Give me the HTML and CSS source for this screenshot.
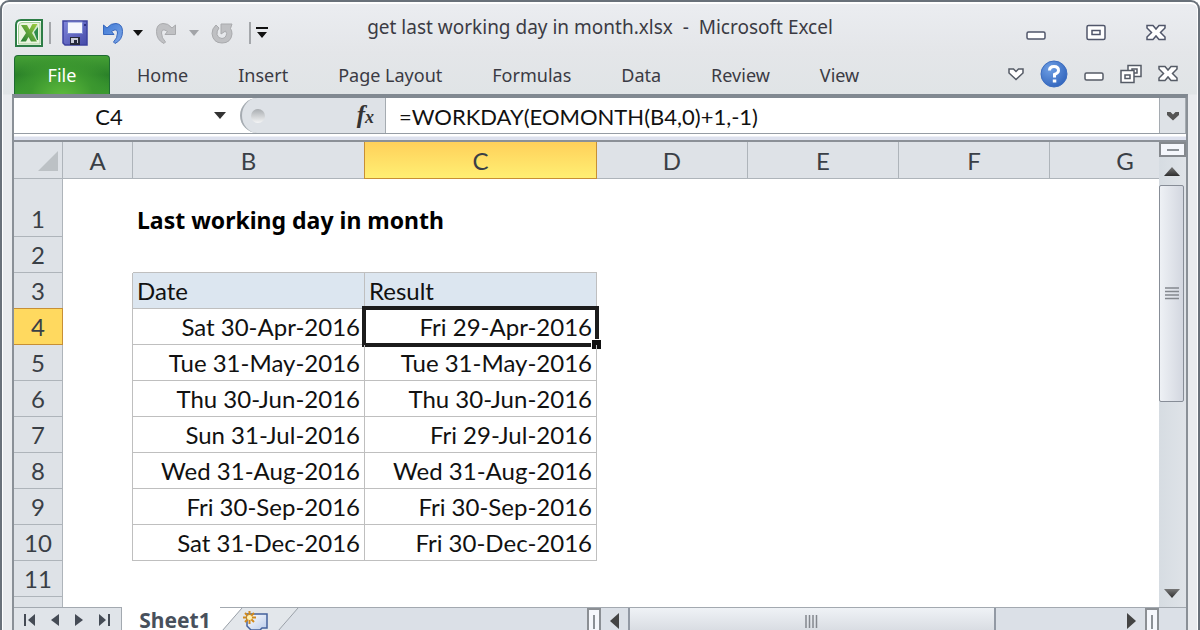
FILE: index.html
```html
<!DOCTYPE html>
<html lang="en">
<head>
<meta charset="utf-8">
<title>get last working day in month.xlsx - Microsoft Excel</title>
<link rel="stylesheet" href="styles.css">
</head>
<body>
<svg class="defs" width="0" height="0" aria-hidden="true">
  <defs>
    <linearGradient id="arrow-v" x1="0" y1="0" x2="0" y2="1"><stop offset="0" stop-color="#777"/><stop offset="1" stop-color="#2e2e2e"/></linearGradient>
    <linearGradient id="blue" x1="0" y1="0" x2="1" y2="1"><stop offset="0" stop-color="#3f7ad6"/><stop offset="1" stop-color="#7ea6e6"/></linearGradient>
    <linearGradient id="disk" x1="0" y1="0" x2="1" y2="1"><stop offset="0" stop-color="#8287dc"/><stop offset="1" stop-color="#444aa8"/></linearGradient>
    <linearGradient id="leaf" x1="1" y1="0" x2="0" y2="1"><stop offset="0" stop-color="#a2cf3e"/><stop offset="1" stop-color="#1f7a34"/></linearGradient>
    <radialGradient id="help" cx=".35" cy=".3" r=".8"><stop offset="0" stop-color="#6f9fe4"/><stop offset="1" stop-color="#2e62bb"/></radialGradient>
    <linearGradient id="knob" x1="0" y1="0" x2="0" y2="1"><stop offset="0" stop-color="#a9adb1"/><stop offset="1" stop-color="#f4f5f6"/></linearGradient>
    <linearGradient id="page" x1="0" y1="0" x2="1" y2="1"><stop offset="0" stop-color="#fff"/><stop offset="1" stop-color="#b9cbea"/></linearGradient>
  </defs>
</svg>
<div class="window">
  <header class="titlebar">
    <div class="quick">
      <svg class="app" width="30" height="28" viewBox="0 0 30 28">
        <path d="M7 1H28V27H2V6Q2 1 7 1Z" fill="#fff" stroke="#2d7d46" stroke-width="2"/>
        <path d="M8 3.500H26V25H4.500V7Q4.500 3.500 8 3.500Z" fill="#eaf4df" stroke="#a5cf9a"/>
        <path d="M17 6h7v15h-7z" fill="#d4ead0"/>
        <path d="M20 13L24 8V21H23Z" fill="#2c8a4a"/>
        <path d="M7 6H13L15.500 10.500L18.500 5H23.500L18 14L23 22.500H17L14.500 18L12 22.500H6.500L12 14Z" fill="url(#leaf)"/>
      </svg>
      <span class="sep"></span>
      <button class="q save" aria-label="Save"><svg width="26" height="26" viewBox="0 0 26 26">
        <path d="M1 1H25V25H3L1 23Z" fill="url(#disk)" stroke="#3d429f" stroke-width="1.500"/>
        <path d="M5.500 2H20.500V13.500H5.500Z" fill="#f5f7fd" stroke="#7f8bd2"/>
        <path d="M8 17H18V25H8Z" fill="#262a3a"/><path d="M9 18h7v5h-7z" fill="#c9cdd8"/><path d="M12 20h3v4h-3z" fill="#262a3a"/>
        <path d="M22 4h2v2h-2z" fill="#2d3180"/>
      </svg></button>
      <button class="q undo" aria-label="Undo"><svg width="24" height="24" viewBox="0 0 24 24">
        <path d="M2.500 4L6 7Q10 2 15 2.500Q21.500 3 21.500 10.500Q21.500 19 14 22.500L12.500 21Q16.500 17 16.500 12Q16.500 6.500 10.500 10.500L13 13.500H2.500Z" fill="url(#blue)" stroke="#3767bd"/>
      </svg></button>
      <button class="q more" aria-label="Undo list"><svg width="10" height="6" viewBox="0 0 10 6"><path d="M0 0H10L5 6Z" fill="#111"/></svg></button>
      <button class="q redo" aria-label="Redo"><svg width="24" height="24" viewBox="0 0 24 24">
        <path d="M21.500 4L18 7Q14 2 9 2.500Q2.500 3 2.500 10.500Q2.500 19 10 22.500L11.500 21Q7.500 17 7.500 12Q7.500 6.500 13.500 10.500L11 13.500H21.500Z" fill="#c0c1c4" stroke="#a9aaad"/>
      </svg></button>
      <button class="q more" aria-label="Redo list"><svg width="10" height="6" viewBox="0 0 10 6"><path d="M0 0H10L5 6Z" fill="#a2a4a8"/></svg></button>
      <button class="q repeat" aria-label="Repeat"><svg width="24" height="24" viewBox="0 0 24 24">
        <path d="M6 4Q2 7.500 2 12.500Q3 22 12 22Q21 22 22 13Q22 9.500 20.500 7.500L22 3H11V13L15.500 10Q17.500 12.500 16 15Q14.500 17.500 12 17.500Q8 17.500 7 13.500Q6.500 10 9 7Z" fill="#bfc0c3" stroke="#a9aaad"/>
      </svg></button>
      <span class="sep"></span>
      <button class="q custom" aria-label="Customize toolbar"><svg width="14" height="12" viewBox="0 0 14 12"><path d="M1 0H13V2H1ZM2 5H12L7 11Z" fill="#111"/></svg></button>
    </div>
    <h1 class="title">get last working day in month.xlsx&nbsp; -&nbsp; Microsoft Excel</h1>
    <div class="winbtns">
      <button aria-label="Minimize"><svg width="20" height="18" viewBox="0 0 20 18"><rect x="1" y="8" width="18" height="7" rx="1.500" fill="#fff" stroke="#50566a" stroke-width="1.500"/></svg></button>
      <button aria-label="Maximize"><svg width="20" height="18" viewBox="0 0 20 18"><rect x="1" y="1.500" width="18" height="14" rx="1.500" fill="#fff" stroke="#50566a" stroke-width="1.500"/><rect x="6" y="6.500" width="8" height="4" fill="#fff" stroke="#50566a" stroke-width="1.500"/></svg></button>
      <button aria-label="Close"><svg width="20" height="18" viewBox="0 0 20 18"><path d="M1 1.500H7L10 5L13 1.500H19V4L14.500 8.500L19 13V15.500H13L10 12L7 15.500H1V13L5.500 8.500L1 4Z" fill="#fff" stroke="#50566a" stroke-width="1.500"/></svg></button>
    </div>
  </header>
  <nav class="tabs">
    <button class="tab file">File</button>
    <button class="tab">Home</button>
    <button class="tab">Insert</button>
    <button class="tab">Page Layout</button>
    <button class="tab">Formulas</button>
    <button class="tab">Data</button>
    <button class="tab">Review</button>
    <button class="tab">View</button>
    <div class="bookbtns">
      <button aria-label="Expand ribbon"><svg width="16" height="14" viewBox="0 0 16 14"><path d="M1 2H5.500L8 4.500L10.500 2H15V6L8 12.500L1 6Z" fill="#fff" stroke="#555b66" stroke-width="1.500"/></svg></button>
      <button aria-label="Help"><svg width="28" height="28" viewBox="0 0 28 28"><circle cx="14" cy="14" r="13" fill="url(#help)" stroke="#3d6dbf"/><path d="M9.500 10.500Q9.500 6.500 14 6.500T18.500 10.500Q18.500 13 14.500 14.500V17.500" fill="none" stroke="#fff" stroke-width="3"/><path d="M12.800 19.500h3.500v3h-3.500z" fill="#fff"/></svg></button>
      <button aria-label="Minimize workbook"><svg width="20" height="18" viewBox="0 0 20 18"><rect x="1" y="8" width="18" height="7" rx="1.500" fill="#fff" stroke="#555b66" stroke-width="1.500"/></svg></button>
      <button aria-label="Restore workbook"><svg width="22" height="20" viewBox="0 0 22 20"><rect x="8" y="1.500" width="13" height="11" fill="#fff" stroke="#555b66" stroke-width="1.500"/><path d="M12 5h5v4h-5z" fill="#fff" stroke="#555b66" stroke-width="1.500"/><rect x="1" y="6.500" width="13" height="12" fill="#fff" stroke="#555b66" stroke-width="1.500"/><rect x="5" y="11" width="5" height="3.500" fill="#fff" stroke="#555b66" stroke-width="1.500"/></svg></button>
      <button aria-label="Close workbook"><svg width="20" height="18" viewBox="0 0 20 18"><path d="M1 1.500H7L10 5L13 1.500H19V4L14.500 8.500L19 13V15.500H13L10 12L7 15.500H1V13L5.500 8.500L1 4Z" fill="#fff" stroke="#555b66" stroke-width="1.500"/></svg></button>
    </div>
  </nav>
  <main class="work">
    <div class="formula-bar">
      <div class="namebox">
        <input class="name" aria-label="Name box" value="C4">
        <button class="drop" aria-label="Names"><svg width="12" height="7" viewBox="0 0 12 7"><path d="M0 0H12L6 7Z" fill="#333"/></svg></button>
      </div>
      <div class="fx">
        <svg width="16" height="16" viewBox="0 0 16 16"><circle cx="8" cy="8" r="7" fill="url(#knob)"/></svg>
        <button class="fxbtn" aria-label="Insert function"><i>f</i><i class="x">x</i></button>
      </div>
      <input class="formula" aria-label="Formula" value="=WORKDAY(EOMONTH(B4,0)+1,-1)">
      <button class="expand" aria-label="Expand formula bar"><svg width="14" height="10" viewBox="0 0 14 10"><path d="M1 1H4.500L7 3.500L9.500 1H13V4L7 9.500L1 4Z" fill="#555"/></svg></button>
    </div>
    <div class="strip"></div>
    <div class="sheet">
      <div class="grid">
        <table>
          <colgroup><col class="c-head"><col class="c-a"><col class="c-wide"><col class="c-wide"><col class="c-std"><col class="c-std"><col class="c-std"><col class="c-std"></colgroup>
          <thead>
            <tr><th class="corner"><svg width="20" height="20" viewBox="0 0 20 20"><path d="M20 0V20H0Z" fill="#bcc1c5"/></svg></th><th>A</th><th>B</th><th class="on">C</th><th>D</th><th>E</th><th>F</th><th>G</th></tr>
          </thead>
          <tbody>
            <tr class="tall"><th>1</th><td></td><td class="heading" colspan="2">Last working day in month</td></tr>
            <tr><th>2</th><td></td><td class="b"></td><td class="b"></td></tr>
            <tr><th>3</th><td class="r"></td><td class="r b label">Date</td><td class="r b label">Result</td></tr>
            <tr><th class="on">4</th><td class="r"></td><td class="r b">Sat 30-Apr-2016</td><td class="r b selected">Fri 29-Apr-2016</td></tr>
            <tr><th>5</th><td class="r"></td><td class="r b">Tue 31-May-2016</td><td class="r b">Tue 31-May-2016</td></tr>
            <tr><th>6</th><td class="r"></td><td class="r b">Thu 30-Jun-2016</td><td class="r b">Thu 30-Jun-2016</td></tr>
            <tr><th>7</th><td class="r"></td><td class="r b">Sun 31-Jul-2016</td><td class="r b">Fri 29-Jul-2016</td></tr>
            <tr><th>8</th><td class="r"></td><td class="r b">Wed 31-Aug-2016</td><td class="r b">Wed 31-Aug-2016</td></tr>
            <tr><th>9</th><td class="r"></td><td class="r b">Fri 30-Sep-2016</td><td class="r b">Fri 30-Sep-2016</td></tr>
            <tr><th>10</th><td class="r"></td><td class="r b">Sat 31-Dec-2016</td><td class="r b">Fri 30-Dec-2016</td></tr>
            <tr><th>11</th></tr>
            <tr><th></th></tr>
          </tbody>
        </table>
      </div>
      <div class="vscroll">
        <div class="vsplit"></div>
        <button class="step" aria-label="Scroll up"><svg width="16" height="9" viewBox="0 0 16 9"><path d="M8 0L16 9H0Z" fill="url(#arrow-v)"/></svg></button>
        <div class="vtrack"><div class="vthumb"><svg width="14" height="13" viewBox="0 0 14 13"><path d="M0 1H14M0 4.500H14M0 8H14M0 11.500H14" stroke="#84888e" stroke-width="1.500"/></svg></div></div>
        <button class="step" aria-label="Scroll down"><svg width="16" height="9" viewBox="0 0 16 9"><path d="M0 0H16L8 9Z" fill="url(#arrow-v)"/></svg></button>
      </div>
    </div>
    <footer class="bottom">
      <div class="sheetnav">
        <button aria-label="First sheet"><svg width="12" height="12" viewBox="0 0 12 12"><path d="M0 0h2v12H0zM11 0V12L4 6Z" fill="#454b55"/></svg></button>
        <button aria-label="Previous sheet"><svg width="8" height="12" viewBox="0 0 8 12"><path d="M8 0V12L0 6Z" fill="#454b55"/></svg></button>
        <button aria-label="Next sheet"><svg width="8" height="12" viewBox="0 0 8 12"><path d="M0 0V12L8 6Z" fill="#454b55"/></svg></button>
        <button aria-label="Last sheet"><svg width="12" height="12" viewBox="0 0 12 12"><path d="M10 0h2v12h-2zM1 0V12L8 6Z" fill="#454b55"/></svg></button>
      </div>
      <button class="sheettab">Sheet1</button>
      <button class="newsheet" aria-label="Insert sheet"><svg width="80" height="23" viewBox="0 0 80 23">
        <path d="M0 0H22L2 23H0Z" fill="#fff"/><path d="M22 0H78L58 23H2Z" fill="#e3e7eb"/>
        <path d="M22 0L2 23M78 0L58 23" stroke="#9aa0a8" fill="none"/>
        <path d="M27 6H47V20H42L40 22H31L27 18Z" fill="url(#page)" stroke="#44629c" stroke-width="1.500"/>
        <path d="M29.500 3V16M23 9.500H36M25 5L34 14M34 5L25 14" stroke="#d18a1c" stroke-width="2"/><circle cx="29.500" cy="9.500" r="2.500" fill="#fff2b8"/>
      </svg></button>
      <div class="tabspace"></div>
      <div class="hsplit"></div>
      <button class="hstep" aria-label="Scroll left"><svg width="9" height="16" viewBox="0 0 9 16"><path d="M9 0V16L0 8Z" fill="#444"/></svg></button>
      <div class="htrack"><div class="hthumb"><svg width="13" height="13" viewBox="0 0 13 13"><path d="M1 0V13M4.500 0V13M8 0V13M11.500 0V13" stroke="#84888e" stroke-width="1.500"/></svg></div></div>
      <button class="hstep" aria-label="Scroll right"><svg width="9" height="16" viewBox="0 0 9 16"><path d="M0 0V16L9 8Z" fill="#444"/></svg></button>
      <div class="hsplit"></div>
      <div class="endcap"></div>
    </footer>
  </main>
</div>
</body>
</html>
```
FILE: styles.css
```css
* { box-sizing: border-box; }
body { margin: 0; background: #fff; font-family: "Noto Sans", "Open Sans", sans-serif; color: #3b3b44; }
button { border: 0; padding: 0; background: none; font: inherit; color: inherit; display: flex; align-items: center; justify-content: center; }
input { border: 0; padding: 0; margin: 0; background: none; min-width: 0; }
svg { display: block; flex: none; }
.defs { position: absolute; }

.window {
  height: 100vh; display: flex; flex-direction: column; overflow: hidden;
  border: 2px solid #69717a; border-bottom: 0; border-radius: 9px 9px 0 0;
  background: linear-gradient(#ebedf1, #e4e6e9 50px, #e0e4e6 92px, #e9ebee 93px);
  box-shadow: inset 0 2px #fff, inset 1px 0 #fff, inset -1px 0 #fff;
}

.titlebar { display: grid; grid-template-columns: 1fr auto 1fr; height: 53px; flex: none; padding: 0 12px; }
.title { margin: 0; font-size: 19px; line-height: 50px; font-weight: 400; white-space: nowrap; }
.quick { display: flex; align-items: center; padding-top: 8px; }
.q { height: 28px; }
.save, .undo { width: 38px; }
.more { width: 12px; }
.redo, .repeat { width: 44px; }
.custom { width: 12px; }
.sep { width: 2px; height: 22px; margin: 0 5px; background: #a4a7ab; }
.winbtns { display: flex; justify-content: flex-end; align-items: center; gap: 40px; padding: 8px 20px 0 0; }

.tabs { display: flex; height: 39px; flex: none; padding: 0 12px; }
.tab { padding: 0 25px; font-size: 18px; line-height: 24px; white-space: nowrap; }
.file {
  width: 96px; margin-right: 2px; color: #fff; border: 1px solid #1f6b33; border-bottom: 0; border-radius: 4px 4px 0 0;
  background: radial-gradient(ellipse at 50% 120%, #63c03f, #3c982f 50%, transparent 80%), linear-gradient(#45a035, #2b8229 50%, #3a9a30);
}
.bookbtns { display: flex; align-items: center; gap: 16px; margin-left: auto; padding: 0 8px 2px 0; }

.work { flex: 1; min-height: 0; margin: 0 10px; display: flex; flex-direction: column; border: 2px solid #8a9097; border-top: 4px solid #818991; border-bottom: 0; }
.formula-bar { display: flex; height: 36px; flex: none; background: #fff; border-bottom: 1px solid #969da5; }
.formula-bar, .grid { font-family: Lato, "Noto Sans", sans-serif; font-size: 24px; }
.namebox { display: flex; width: 226px; }
.name { flex: 1; padding: 2px 0 0 4px; text-align: center; font: inherit; font-size: 22px; color: #111; }
.drop { width: 40px; }
.fx { display: flex; align-items: center; justify-content: space-between; width: 146px; padding: 0 11px 0 8px; background: #dee2e7; border: 1px solid #a5abb1; border-width: 0 1px 0 2px; border-radius: 18px 0 0 18px; }
.fxbtn { font-family: "Liberation Serif", serif; font-weight: 700; font-size: 25px; line-height: 28px; color: #333; align-items: baseline; }
.x { font-size: 18px; }
.formula { flex: 1; padding: 2px 0 0 13px; font: inherit; font-size: 22px; color: #111; }
.expand { width: 27px; background: #dee2e7; border: 1px solid #a5abb1; border-width: 0 1px; }
.strip { height: 8px; flex: none; background: linear-gradient(#fff 2px, #dde1ee 3px); border-bottom: 2px solid #8b9097; }

.sheet { display: flex; flex: 1; min-height: 0; }
.grid { flex: 1; min-width: 0; overflow: hidden; background: #fff; }
table { width: 1187px; table-layout: fixed; border-spacing: 0; line-height: 34px; color: #111; }
.c-head { width: 49px; }
.c-a { width: 70px; }
.c-wide { width: 232px; }
.c-std { width: 151px; }
th, td { height: 36px; padding: 0 4px; vertical-align: bottom; white-space: nowrap; border: 0 solid #bfbfbf; }
td { text-align: right; position: relative; }
th { font-weight: 400; text-align: center; color: #3a3f46; background: #dee2e7; border: 0 solid #aeb4ba; border-width: 0 1px 1px 0; }
thead th { height: 37px; }
.corner svg { margin: 0 0 7px auto; }
.tall th, .tall td { height: 58px; }
.r { border-right-width: 1px; }
.b { border-bottom-width: 1px; }
.label { text-align: left; background: #dce6f0; }
.heading { text-align: left; font-family: "Noto Sans", "Open Sans", sans-serif; font-size: 23px; font-weight: 700; color: #000; }
.on { background: linear-gradient(#ffd05a, #ffef73); border-color: #c78f35; }
tbody .on { background: #ffd95f; box-shadow: 0 -1px #c78f35; }
thead .on { box-shadow: -1px 0 #c78f35; }
.selected::before { content: ""; position: absolute; inset: -3px; border: 4px solid #1c1c1c; }
.selected::after { content: ""; position: absolute; right: -5px; bottom: -5px; width: 9px; height: 9px; background: #111; border: 1px solid #fff; border-width: 1px 0 0 1px; }

.vscroll { display: flex; flex-direction: column; width: 27px; background: linear-gradient(90deg, #d6dce2, #dfe3e8); }
.vsplit { height: 15px; border: 2px solid #85898e; background: linear-gradient(#8b9096, #8b9096) center / 12px 2px no-repeat, #f5f7fc; }
.step { height: 28px; flex: none; padding-right: 2px; }
.vtrack { flex: 1; }
.vthumb { height: 55%; width: 25px; display: flex; align-items: center; justify-content: center; border: 1px solid #878d97; border-radius: 2px; background: linear-gradient(90deg, #eef1f5, #d3d7e0); }

.bottom { display: flex; flex: none; height: 23px; background: #dbe0e7; border-top: 1px solid #a3a9b0; }
.sheetnav { display: flex; align-items: center; justify-content: space-between; width: 108px; padding: 2px 11px 0 10px; border-right: 1px solid #a3a9b0; background: #e0e4e9; }
.sheettab { width: 98px; margin-top: -1px; padding: 2px 0 0 8px; background: #fff; font-weight: 700; font-size: 21px; line-height: 20px; color: #48505c; }
.newsheet { width: 80px; }
.tabspace { flex: 0 1 287px; min-width: 0; }
.hsplit { width: 14px; flex: none; border: 2px solid #8b8f94; border-bottom: 0; background: linear-gradient(#8b9096, #8b9096) 4px 5px / 2px 14px no-repeat, #f5f7fc; }
.hstep { width: 27px; height: 26px; flex: none; }
.htrack { flex: 1; }
.hthumb { width: 75%; height: 100%; display: flex; align-items: center; justify-content: center; padding-top: 4px; border: 2px solid #9299a4; border-width: 0 2px; background: linear-gradient(#eff2f6, #d9dde3); }
.endcap { width: 27px; flex: none; }
```
